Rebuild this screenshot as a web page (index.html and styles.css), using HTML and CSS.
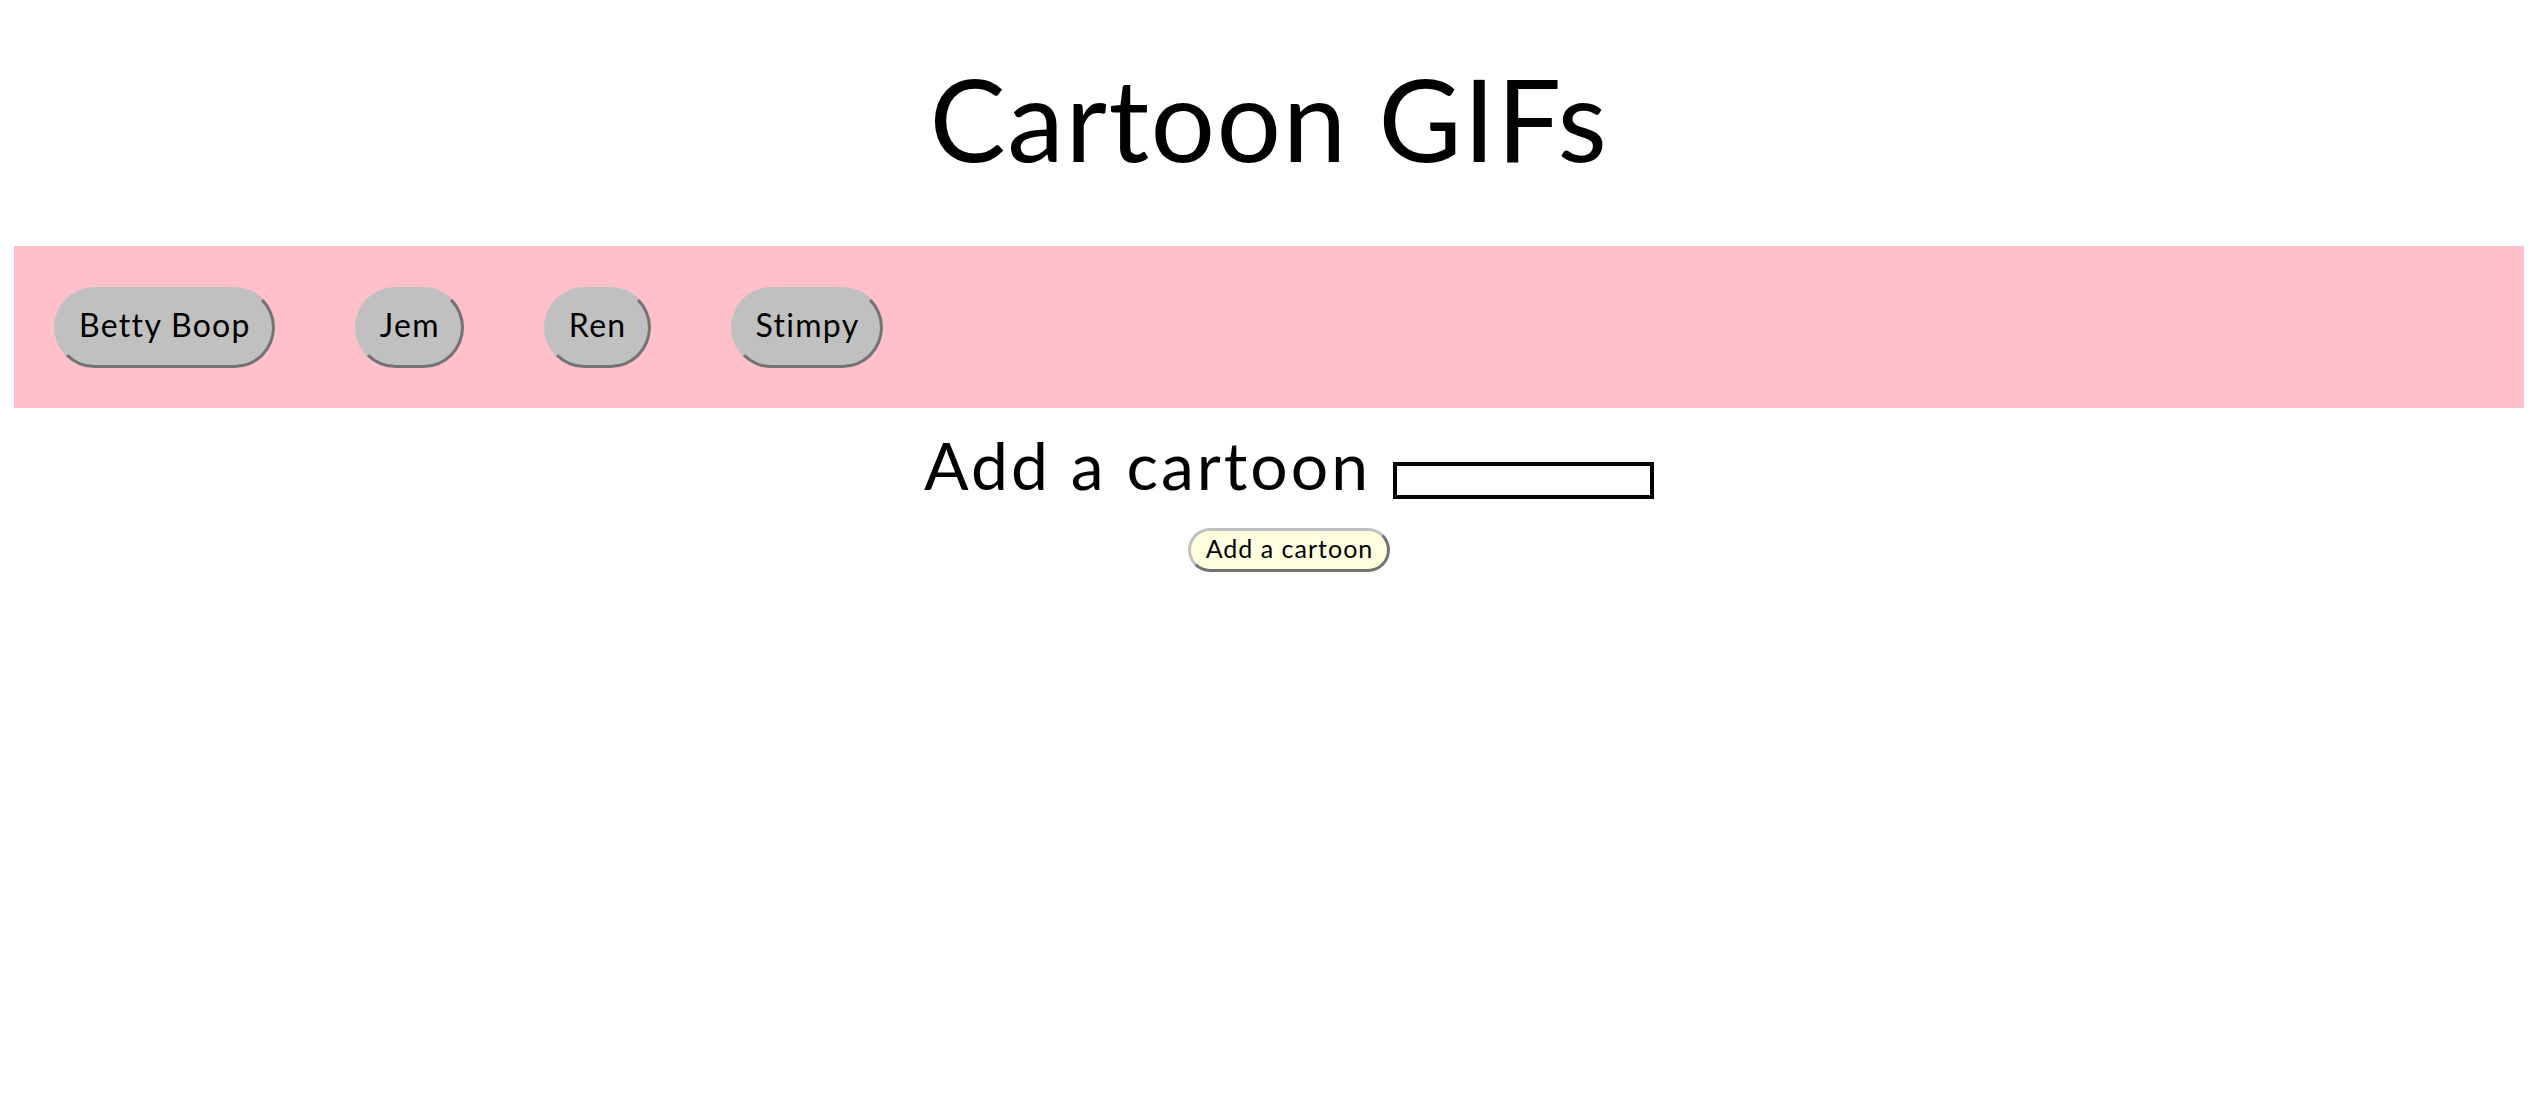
FILE: index.html
```html
<!DOCTYPE html>
<html>
<head>
<meta charset="utf-8">
<title>Cartoon GIFs</title>
<link rel="stylesheet" href="styles.css">
</head>
<body>
<div class="page">
  <header class="header">
    <h1 class="title">Cartoon GIFs</h1>
  </header>
  <div class="bar">
    <button class="cartoon">Betty Boop</button>
    <button class="cartoon">Jem</button>
    <button class="cartoon">Ren</button>
    <button class="cartoon">Stimpy</button>
  </div>
  <div class="main">
    <form class="add-form">
      <div class="add-row">
        <label class="add-label" for="cartoon-input">Add a cartoon</label>
        <input class="add-input" id="cartoon-input" type="text">
      </div>
      <button class="add-btn" type="button">Add a cartoon</button>
    </form>
  </div>
</div>
</body>
</html>
```
FILE: styles.css
```css
html, body {
  margin: 0;
  padding: 0;
  background: #ffffff;
}
body {
  font-family: "Lato", "Noto Sans", sans-serif;
  color: #000;
}
.page {
  padding: 0 14px;
}
.header {
  height: 246px;
  text-align: center;
}
.title {
  margin: 0;
  padding-top: 50px;
  font-size: 114px;
  font-weight: 400;
  line-height: 1.2;
  letter-spacing: 1.5px;
}
.bar {
  background: #ffc0cb;
  display: flex;
  align-items: center;
  gap: 80px;
  padding: 40px;
  height: 162px;
  box-sizing: border-box;
}
.cartoon {
  font-family: "Lato", "Noto Sans", sans-serif;
  font-size: 32px;
  letter-spacing: 1.3px;
  height: 81px;
  padding: 0 21px 5px 22px;
  background: #c0c0c0;
  border: 3px solid;
  border-color: #c0c0c0 #737373 #737373 #c0c0c0;
  border-radius: 41px;
  color: #000;
}
.main {
  padding-left: 40px;
}
.add-form {
  display: flex;
  flex-direction: column;
  align-items: center;
}
.add-row {
  display: flex;
  align-items: flex-start;
  gap: 22px;
  margin-top: 24px;
}
.add-label {
  font-size: 66px;
  line-height: 1;
  letter-spacing: 3px;
}
.add-input {
  width: 261px;
  height: 37px;
  box-sizing: border-box;
  border: 4px solid #000;
  margin: 30px 0 0 0;
  padding: 0;
  background: #fff;
}
.add-btn {
  margin-top: 29px;
  font-family: "Lato", "Noto Sans", sans-serif;
  font-size: 25px;
  letter-spacing: 1px;
  height: 44px;
  padding: 0 14px 4px 15px;
  background: #ffffe0;
  border: 3px solid;
  border-color: #c0c0c0 #737373 #737373 #c0c0c0;
  border-radius: 22px;
  color: #000;
}
```
